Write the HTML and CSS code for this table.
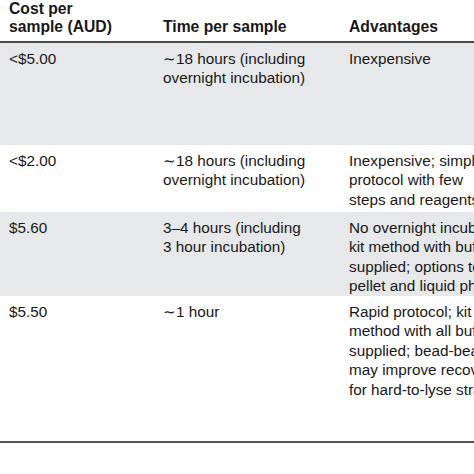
FILE: index.html
```html
<!DOCTYPE html>
<html>
<head>
<meta charset="utf-8">
<link rel="stylesheet" href="styles.css">
</head>
<body>
<div class="table">
  <div class="row head">
    <div class="cell">Cost per<br>sample (AUD)</div>
    <div class="cell">Time per sample</div>
    <div class="cell">Advantages</div>
  </div>
  <div class="row shaded r1">
    <div class="cell">&lt;$5.00</div>
    <div class="cell">&#8764;18 hours (including<br>overnight incubation)</div>
    <div class="cell">Inexpensive</div>
  </div>
  <div class="row r2">
    <div class="cell">&lt;$2.00</div>
    <div class="cell">&#8764;18 hours (including<br>overnight incubation)</div>
    <div class="cell">Inexpensive; simpler<br>protocol with few<br>steps and reagents</div>
  </div>
  <div class="row shaded r3">
    <div class="cell">$5.60</div>
    <div class="cell">3&#8211;4 hours (including<br>3 hour incubation)</div>
    <div class="cell">No overnight incubation;<br>kit method with buffers<br>supplied; options to use<br>pellet and liquid phase</div>
  </div>
  <div class="row r4">
    <div class="cell">$5.50</div>
    <div class="cell">&#8764;1 hour</div>
    <div class="cell">Rapid protocol; kit<br>method with all buffers<br>supplied; bead-beating<br>may improve recovery<br>for hard-to-lyse strains</div>
  </div>
</div>
</body>
</html>
```

FILE: styles.css
```css
html, body {
  margin: 0;
  padding: 0;
  overflow: hidden;
  background: #ffffff;
}

body {
  font-family: "Liberation Sans", Arial, sans-serif;
  font-size: 15.3px;
  color: #1a1819;
}

.table {
  width: 474px;
}

.row {
  display: grid;
  grid-template-columns: 154px 186px 1fr;
}

.cell {
  padding-left: 9px;
  white-space: nowrap;
}

.head {
  height: 43px;
  box-sizing: border-box;
  align-items: end;
  padding-bottom: 8px;
  border-bottom: 2px solid #4a4a4a;
  font-weight: bold;
  font-size: 15.7px;
  line-height: 17.5px;
}

.row:not(.head) {
  box-sizing: border-box;
  padding-top: 5.5px;
  line-height: 19.5px;
  align-items: start;
}

.shaded {
  background: #e6e8e9;
}

.r1 { height: 102px; }
.r2 { height: 67px; }
.r3 { height: 84px; }
.r4 {
  height: 147px;
  border-bottom: 2px solid #555555;
}
```
